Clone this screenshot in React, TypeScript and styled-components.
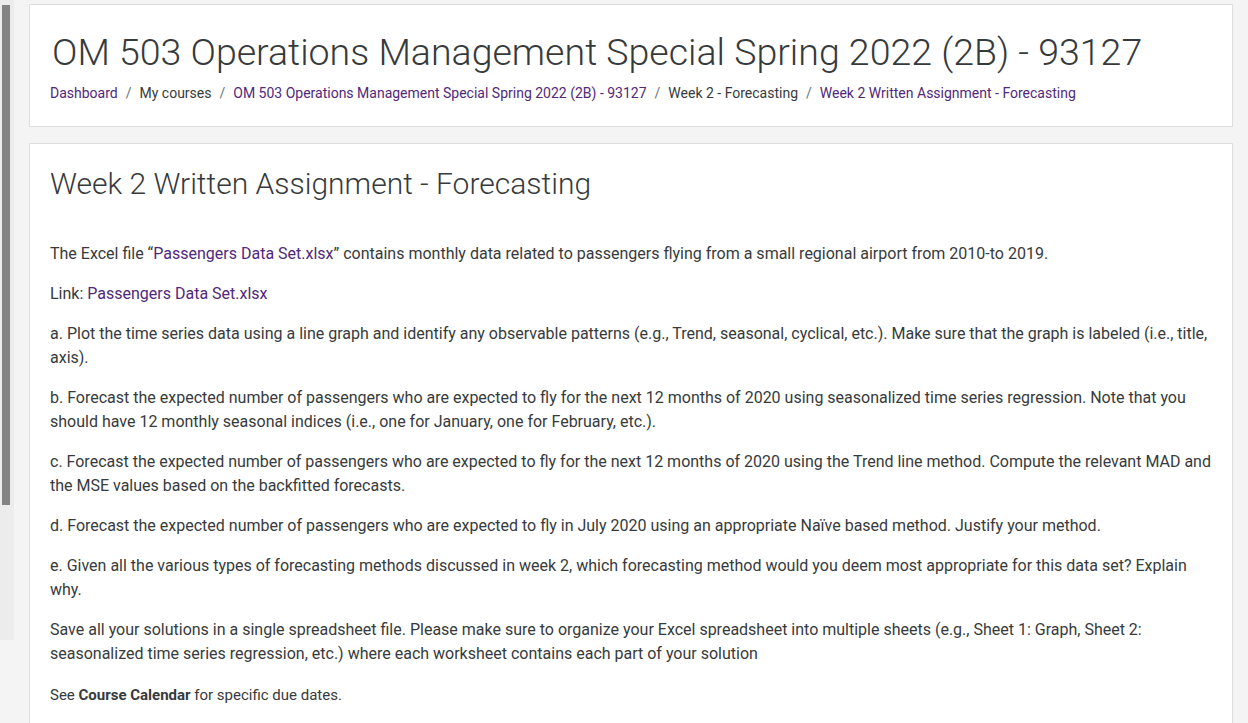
import React from "react";
import styled, { createGlobalStyle } from "styled-components";

const Global = createGlobalStyle`
  html, body { margin: 0; padding: 0; }
  body {
    background: #f4f4f4;
    font-family: Roboto, "Liberation Sans", sans-serif;
    color: #373a3c;
    overflow: hidden;
  }
`;

const Page = styled.div`
  display: flex;
  align-items: flex-start;
  height: 723px;
  overflow: hidden;
`;

const ScrollTrack = styled.div`
  width: 14px;
  height: 640px;
  flex: none;
  background: #ececec;
  padding: 5px 4px 0 2px;
  box-sizing: border-box;
`;

const ScrollThumb = styled.div`
  width: 8px;
  height: 500px;
  background: #838383;
`;

const Main = styled.div`
  flex: 1;
  margin: 4px 15px 0 15px;
  display: flex;
  flex-direction: column;
  gap: 16px;
  min-width: 0;
`;

const Card = styled.section<{ $pad: string }>`
  background: #fff;
  border: 1px solid #dedede;
  padding: ${(p) => p.$pad};
`;

const PageTitle = styled.h1`
  margin: 0 0 8px 2px;
  font-size: 37.5px;
  font-weight: 300;
  line-height: 45px;
  color: #373a3c;
`;

const Crumbs = styled.ol`
  list-style: none;
  margin: 0;
  padding: 0;
  display: flex;
  flex-wrap: wrap;
  font-size: 14px;
  line-height: 21px;
`;

const Crumb = styled.li<{ $first?: boolean }>`
  display: flex;
  color: #373a3c;
  ${(p) =>
    !p.$first &&
    `
    &::before {
      content: "/";
      color: #6a737b;
      padding: 0 8px 0 8px;
    }
  `}
`;

const Link = styled.a`
  color: #51287a;
  text-decoration: none;
`;

const Heading = styled.h2`
  margin: 1px 0 40px 0;
  font-size: 30px;
  font-weight: 300;
  line-height: 36px;
  color: #373a3c;
`;

const Para = styled.p<{ $small?: boolean }>`
  margin: 0 0 16px 0;
  font-size: ${(p) => (p.$small ? "15px" : "16px")};
  line-height: ${(p) => (p.$small ? "26px" : "24px")};
`;

const Strong = styled.strong`
  font-weight: 700;
`;

export default function App() {
  return (
    <>
      <Global />
      <Page>
        <ScrollTrack>
          <ScrollThumb />
        </ScrollTrack>
        <Main>
          <Card $pad="25px 20px 22px 20px">
            <PageTitle>OM 503 Operations Management Special Spring 2022 (2B) - 93127</PageTitle>
            <Crumbs>
              <Crumb $first>
                <Link href="#">Dashboard</Link>
              </Crumb>
              <Crumb>My courses</Crumb>
              <Crumb>
                <Link href="#">OM 503 Operations Management Special Spring 2022 (2B) - 93127</Link>
              </Crumb>
              <Crumb>Week 2 - Forecasting</Crumb>
              <Crumb>
                <Link href="#">Week 2 Written Assignment - Forecasting</Link>
              </Crumb>
            </Crumbs>
          </Card>
          <Card $pad="21px 20px 20px 20px">
            <Heading>Week 2 Written Assignment - Forecasting</Heading>
            <Para>
              The Excel file “<Link href="#">Passengers Data Set.xlsx</Link>” contains monthly data related to
              passengers flying from a small regional airport from 2010-to 2019.
            </Para>
            <Para>
              Link: <Link href="#">Passengers Data Set.xlsx</Link>
            </Para>
            <Para>
              a. Plot the time series data using a line graph and identify any observable patterns (e.g., Trend,
              seasonal, cyclical, etc.). Make sure that the graph is labeled (i.e., title, axis).
            </Para>
            <Para>
              b. Forecast the expected number of passengers who are expected to fly for the next 12 months of 2020
              using seasonalized time series regression. Note that you should have 12 monthly seasonal indices (i.e.,
              one for January, one for February, etc.).
            </Para>
            <Para>
              c. Forecast the expected number of passengers who are expected to fly for the next 12 months of 2020
              using the Trend line method. Compute the relevant MAD and the MSE values based on the backfitted
              forecasts.
            </Para>
            <Para>
              d. Forecast the expected number of passengers who are expected to fly in July 2020 using an
              appropriate Naïve based method. Justify your method.
            </Para>
            <Para>
              e. Given all the various types of forecasting methods discussed in week 2, which forecasting method
              would you deem most appropriate for this data set? Explain why.
            </Para>
            <Para>
              Save all your solutions in a single spreadsheet file. Please make sure to organize your Excel
              spreadsheet into multiple sheets (e.g., Sheet 1: Graph, Sheet 2: seasonalized time series regression,
              etc.) where each worksheet contains each part of your solution
            </Para>
            <Para $small>
              See <Strong>Course Calendar</Strong> for specific due dates.
            </Para>
          </Card>
        </Main>
      </Page>
    </>
  );
}
